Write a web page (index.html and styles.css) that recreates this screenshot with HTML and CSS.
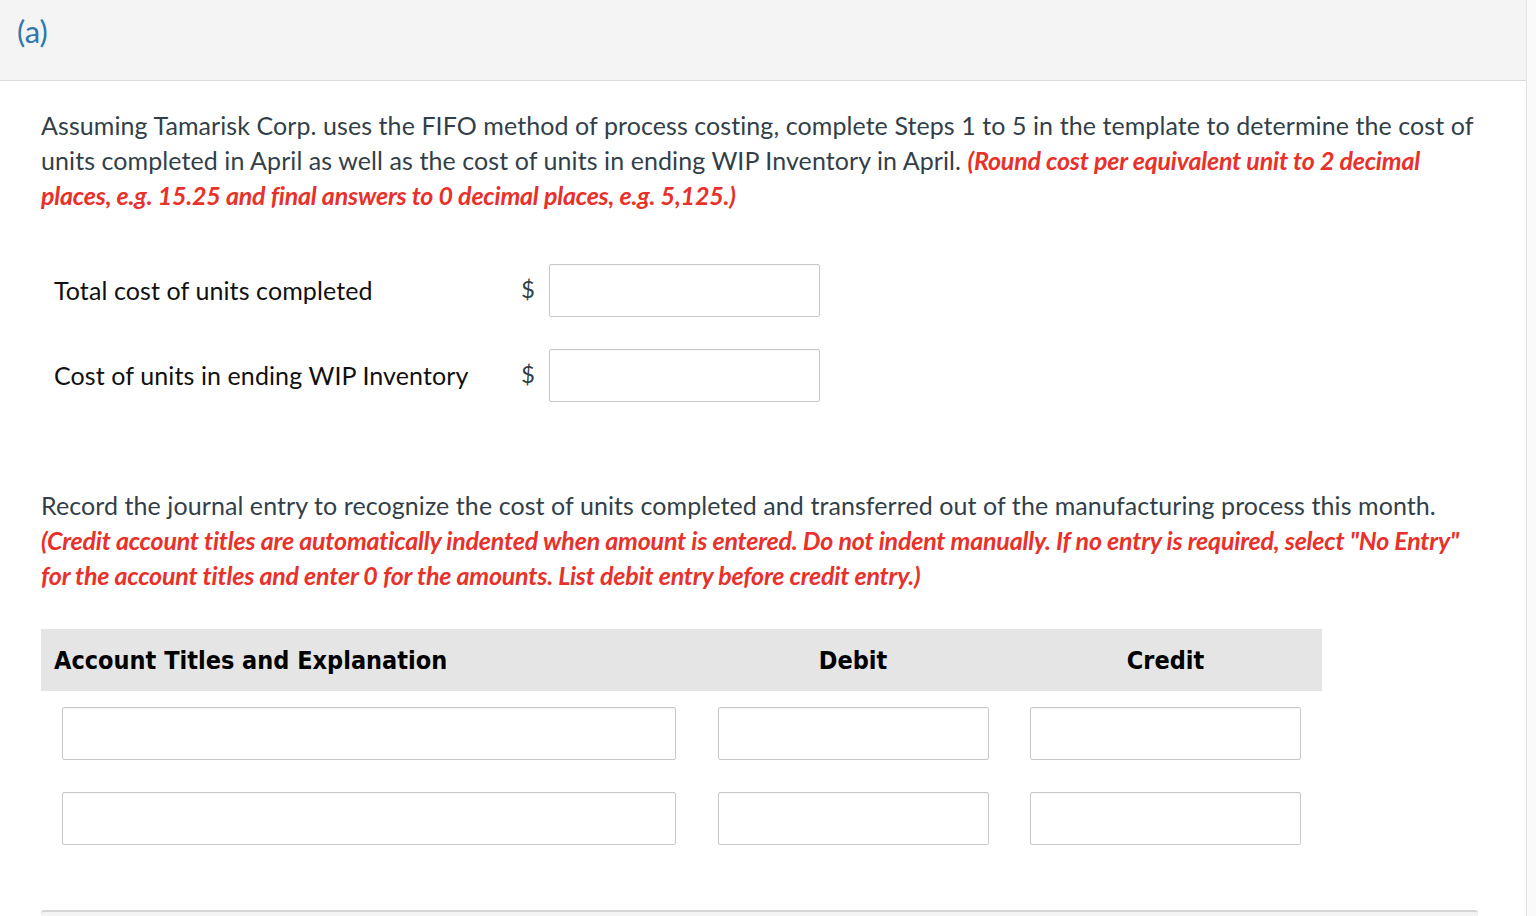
FILE: index.html
```html
<!DOCTYPE html>
<html>
<head>
<meta charset="utf-8">
<link rel="stylesheet" href="styles.css">
</head>
<body>
<div class="page">
  <div class="head"><span class="part">(a)</span></div>
  <div class="content">
    <p class="q">Assuming Tamarisk Corp. uses the FIFO method of process costing, complete Steps 1 to 5 in the template to determine the cost of units completed in April as well as the cost of units in ending WIP Inventory in April. <span class="note">(Round cost per equivalent unit to 2 decimal places, e.g. 15.25 and final answers to 0 decimal places, e.g. 5,125.)</span></p>
    <div class="answers">
      <div class="arow">
        <span class="alabel">Total cost of units completed</span>
        <span class="dollar">$</span>
        <span class="box"></span>
      </div>
      <div class="arow">
        <span class="alabel">Cost of units in ending WIP Inventory</span>
        <span class="dollar">$</span>
        <span class="box"></span>
      </div>
    </div>
    <p class="q q2">Record the journal entry to recognize the cost of units completed and transferred out of the manufacturing process this month. <span class="note">(Credit account titles are automatically indented when amount is entered. Do not indent manually. If no entry is required, select "No Entry" for the account titles and enter 0 for the amounts. List debit entry before credit entry.)</span></p>
    <div class="journal">
      <div class="jhead">
        <div class="c1">Account Titles and Explanation</div>
        <div class="c2">Debit</div>
        <div class="c3">Credit</div>
      </div>
      <div class="jrow">
        <span class="box b1"></span>
        <span class="box b2"></span>
        <span class="box b3"></span>
      </div>
      <div class="jrow">
        <span class="box b1"></span>
        <span class="box b2"></span>
        <span class="box b3"></span>
      </div>
    </div>
    <div class="next"></div>
  </div>
</div>
</body>
</html>
```

FILE: styles.css
```css
html, body {
  margin: 0;
  padding: 0;
  background: #fafafa;
  overflow: hidden;
}
.page {
  width: 1526px;
  height: 916px;
  background: #fff;
  border-right: 1px solid #e3e3e3;
  font-family: Lato, "Open Sans", sans-serif;
  color: #333f48;
}
.head {
  height: 80px;
  background: #f4f4f4;
  border-bottom: 1px solid #dcdcdc;
  padding-left: 17px;
}
.part {
  display: inline-block;
  font-size: 31px;
  line-height: 30px;
  color: #2f77ac;
  margin-top: 16px;
}
.content {
  padding: 0 41px;
}
.q {
  margin: 0;
  font-size: 25px;
  line-height: 35px;
  padding-top: 27px;
  letter-spacing: 0.08px;
}
.note {
  color: #e8312a;
  font-weight: bold;
  font-style: italic;
  letter-spacing: -0.2px;
}
.answers {
  padding-top: 51px;
  padding-left: 13px;
  display: flex;
  flex-direction: column;
  gap: 32px;
}
.arow {
  display: flex;
  align-items: center;
  height: 53px;
}
.alabel {
  width: 467px;
  font-size: 25px;
  letter-spacing: 0.1px;
  color: #111;
  margin-top: -2px;
}
.dollar {
  font-size: 24px;
  width: 28px;
  color: #333f48;
  margin-top: -5px;
}
.box {
  display: block;
  width: 269px;
  height: 51px;
  border: 1px solid #c9c9c9;
  border-radius: 2px;
  background: #fff;
  box-shadow: inset 0 1px 1px rgba(0,0,0,0.04);
}
.q2 {
  padding-top: 86px;
}
.journal {
  margin-top: 36px;
  width: 1281px;
}
.jhead {
  display: flex;
  height: 62px;
  align-items: center;
  background: #e5e5e5;
  font-family: "DejaVu Sans Condensed", "DejaVu Sans", sans-serif;
  font-weight: bold;
  font-size: 25px;
  color: #000;
}
.c1 { width: 656px; padding-left: 13px; box-sizing: border-box; }
.c2 { width: 312px; text-align: center; }
.c3 { width: 313px; text-align: center; }
.jrow {
  display: flex;
  padding-left: 21px;
  margin-top: 16px;
}
.jrow + .jrow { margin-top: 32px; }
.b1 { width: 612px; }
.b2 { margin-left: 42px; }
.b3 { margin-left: 41px; }
.next {
  margin-top: 65px;
  height: 30px;
  width: 1437px;
  background: #f4f4f4;
  border-top: 2px solid #d6d6d6;
  border-radius: 3px 3px 0 0;
}
```
